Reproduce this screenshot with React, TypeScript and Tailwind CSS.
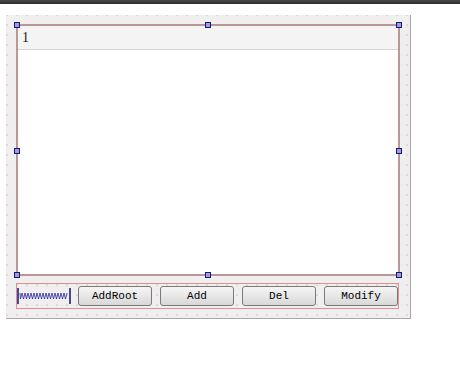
export default function App() {
    const handles = [
        "left-[14px] top-[22px]",
        "left-[205px] top-[22px]",
        "left-[396px] top-[22px]",
        "left-[14px] top-[148px]",
        "left-[396px] top-[148px]",
        "left-[14px] top-[272px]",
        "left-[205px] top-[272px]",
        "left-[396px] top-[272px]",
    ]
    const buttons = ["AddRoot", "Add", "Del", "Modify"]
    return (
        <div className="relative w-[460px] h-[370px] bg-white overflow-hidden">
            <div className="h-[4px] bg-gradient-to-b from-[#4a4a4a] to-[#2e2e2e]" />
            <div className="mt-[11px] ml-[6px] w-[405px] h-[304px] border-r border-b border-[#a8a8a8] bg-[#f0eeee] bg-[radial-gradient(circle,#b0b0b0_0.5px,transparent_0.8px)] bg-[size:10px_10px] bg-[position:-4px_-5px] pl-[10px] pt-[9px]">
                <div className="w-[384px] h-[252px] border-2 border-[#bb9696] bg-white flex flex-col">
                    <div className="h-[24px] bg-[#f4f4f4] border-b border-[#d6d6d6] pl-[4px] flex items-center text-[14px] text-[#222] font-['Liberation_Serif',serif]">
                        1
                    </div>
                    <div className="flex-1" />
                </div>
                <div className="mt-[7px] w-[383px] h-[26px] border border-[#e49090] flex items-center">
                    <svg width="54" height="18" viewBox="0 0 54 18" className="shrink-0">
                        <line x1="1" y1="1" x2="1" y2="17" stroke="#10107a" strokeWidth="1.5" />
                        <line x1="53" y1="1" x2="53" y2="17" stroke="#10107a" strokeWidth="1.5" />
                        <path
                            d={"M3 6 " + Array.from({ length: 32 }, (_, i) => `L${3.5 + i * 1.5} ${i % 2 === 0 ? 12 : 6}`).join(" ")}
                            fill="none"
                            stroke="#28289a"
                            strokeWidth="0.8"
                        />
                    </svg>
                    <div className="ml-[7px] flex gap-[8px]">
                        {buttons.map((b) => (
                            <button
                                key={b}
                                className="w-[74px] h-[20px] rounded-[3px] border border-[#7a7a7a] bg-gradient-to-b from-[#f6f6f6] to-[#d8d8d8] text-[11px] text-black font-['Liberation_Mono',monospace] leading-none"
                            >
                                {b}
                            </button>
                        ))}
                    </div>
                </div>
            </div>
            {handles.map((h) => (
                <div key={h} className={`absolute ${h} w-[6px] h-[6px] border border-[#1a1a6a] bg-[#9c9ce6]`} />
            ))}
        </div>
    )
}
